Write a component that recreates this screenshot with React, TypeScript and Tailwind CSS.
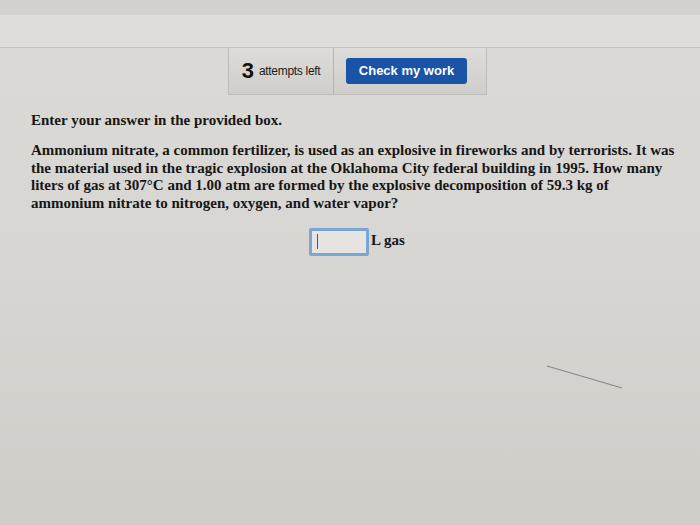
import React from "react";

const serif = { fontFamily: '"Liberation Serif", "Times New Roman", serif' };
const sans = { fontFamily: '"Liberation Sans", Arial, sans-serif' };

export default function App() {
  return (
    <div className="w-[700px] h-[525px] overflow-hidden flex flex-col bg-gradient-to-b from-[#dcdad6] via-[#d8d6d2] to-[#d0cdc9]" style={sans}>
      {/* browser chrome bands */}
      <div className="h-[15px] bg-[#d3d1ce]" />
      <div className="h-[33px] bg-[#dfddda] border-b border-[#c4c2bf]" />

      {/* attempts bar */}
      <div className="flex h-[47px] pl-[228px]">
        <div className="flex border border-t-0 border-[#bdbbb8] bg-gradient-to-b from-[#dedcd9] to-[#d0cecb]">
          <div className="w-[105px] flex items-center justify-center gap-[5px] border-r border-[#b5b3b0]">
            <span className="text-[22px] font-bold text-[#111] leading-none">3</span>
            <span className="text-[12px] text-[#1b1b1b] tracking-[-0.3px]">attempts left</span>
          </div>
          <div className="w-[152px] flex items-center pl-[12px]">
            <button className="w-[121px] h-[26px] rounded-[3px] bg-[#1a54a6] text-white text-[13px] font-bold">
              Check my work
            </button>
          </div>
        </div>
      </div>

      {/* question */}
      <div className="pl-[31px] pr-[10px] text-[#161616] font-bold" style={serif}>
        <p className="mt-[16px] text-[15px] leading-[18px]">Enter your answer in the provided box.</p>
        <p className="mt-[13px] text-[15px] leading-[17.7px] whitespace-nowrap">
          Ammonium nitrate, a common fertilizer, is used as an explosive in fireworks and by terrorists. It was
          <br />
          the material used in the tragic explosion at the Oklahoma City federal building in 1995. How many
          <br />
          liters of gas at 307°C and 1.00 atm are formed by the explosive decomposition of 59.3 kg of
          <br />
          ammonium nitrate to nitrogen, oxygen, and water vapor?
        </p>
        <div className="mt-[15px] ml-[278px] flex items-center gap-[2px]">
          <div className="w-[60px] h-[28px] border-[3px] border-[#7aa6d4] rounded-[2px] bg-[#e6e4e1] flex items-center pl-[5px]">
            <div className="w-px h-[15px] bg-[#555]" />
          </div>
          <span className="text-[15px] -mt-[3px]">L gas</span>
        </div>
      </div>

      {/* scratch on screen */}
      <div className="relative flex-1">
        <svg className="absolute left-0 top-0" width="700" height="300">
          <line x1="547" y1="110" x2="622" y2="132" stroke="#8a8784" strokeWidth="1.2" />
        </svg>
      </div>
    </div>
  );
}
